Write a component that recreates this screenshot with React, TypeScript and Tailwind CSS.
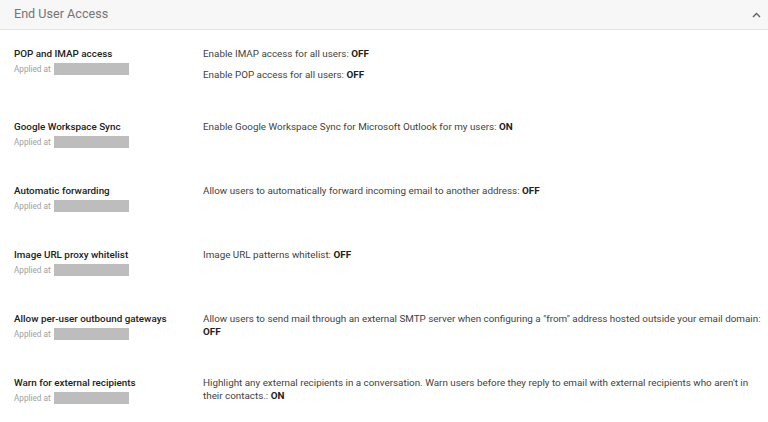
import React from "react";

type Row = {
  title: string;
  lines: React.ReactNode[];
  h: string;
};

const B = ({ children }: { children: React.ReactNode }) => (
  <span className="font-bold text-[#212121]">{children}</span>
);

const rows: Row[] = [
  {
    title: "POP and IMAP access",
    h: "h-[73px]",
    lines: [
      <>Enable IMAP access for all users: <B>OFF</B></>,
      <>Enable POP access for all users: <B>OFF</B></>,
    ],
  },
  {
    title: "Google Workspace Sync",
    h: "h-[64px]",
    lines: [<>Enable Google Workspace Sync for Microsoft Outlook for my users: <B>ON</B></>],
  },
  {
    title: "Automatic forwarding",
    h: "h-[64px]",
    lines: [<>Allow users to automatically forward incoming email to another address: <B>OFF</B></>],
  },
  {
    title: "Image URL proxy whitelist",
    h: "h-[64px]",
    lines: [<>Image URL patterns whitelist: <B>OFF</B></>],
  },
  {
    title: "Allow per-user outbound gateways",
    h: "h-[64px]",
    lines: [
      <>
        Allow users to send mail through an external SMTP server when configuring a "from" address hosted outside your email domain:
        <br />
        <B>OFF</B>
      </>,
    ],
  },
  {
    title: "Warn for external recipients",
    h: "h-[64px]",
    lines: [
      <>
        Highlight any external recipients in a conversation. Warn users before they reply to email with external recipients who aren't in
        <br />
        their contacts.: <B>ON</B>
      </>,
    ],
  },
];

export default function App() {
  return (
    <div
      className="w-[768px] h-[422px] bg-white overflow-hidden"
      style={{ fontFamily: "Roboto, 'Liberation Sans', sans-serif" }}
    >
      <div className="h-[30px] bg-[#f7f7f7] border-b border-[#e3e3e3] flex items-center justify-between pl-[14px] pr-[7px]">
        <span className="text-[12.6px] text-[#757575] leading-none">End User Access</span>
        <svg width="9" height="6" viewBox="0 0 9 6" className="mt-[1px]">
          <path d="M1 5 L4.5 1.5 L8 5" fill="none" stroke="#616161" strokeWidth="1.4" />
        </svg>
      </div>
      <div className="pt-[17px]">
        {rows.map((r) => (
          <div key={r.title} className={`flex ${r.h}`}>
            <div className="w-[203px] shrink-0 pl-[14px]">
              <div className="text-[9.85px] leading-[13px] font-medium text-[#212121]">{r.title}</div>
              <div className="flex items-center mt-[3px] h-[12px]">
                <span className="text-[8.2px] leading-[12px] text-[#9e9e9e]">Applied at</span>
                <span className="ml-[3px] w-[75px] h-[12px] bg-[#bdbdbd]" />
              </div>
            </div>
            <div className="flex flex-col gap-[8px] text-[9.85px] leading-[13px] text-[#424242] whitespace-nowrap">
              {r.lines.map((l, i) => (
                <div key={i}>{l}</div>
              ))}
            </div>
          </div>
        ))}
      </div>
    </div>
  );
}
